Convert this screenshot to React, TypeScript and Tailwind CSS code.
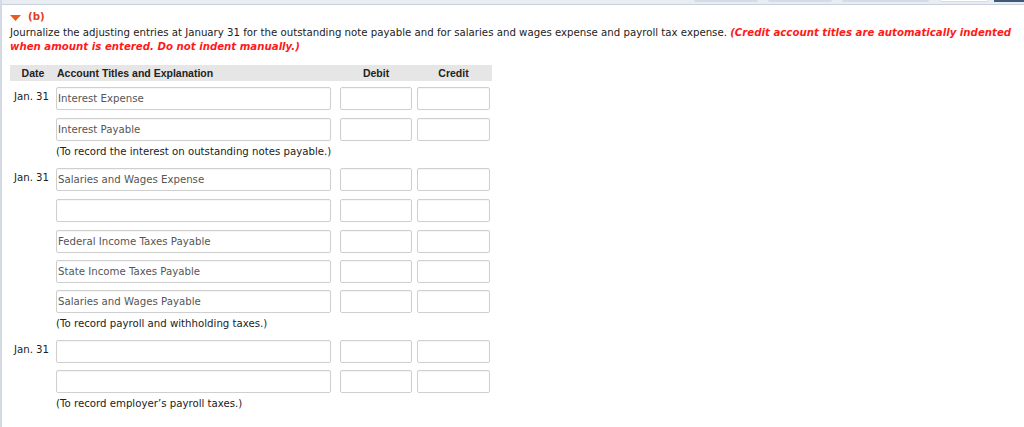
import React from "react";

type Row = { date?: string; text?: string; mt: string };

function Input({ text, w }: { text?: string; w: string }) {
  return (
    <div
      className={`${w} h-[23px] border border-[#cfcfcf] rounded-[2px] bg-white text-[#555] text-[10.2px] leading-[21px] pl-[1px] shadow-[inset_0_1px_1px_rgba(0,0,0,0.04)] whitespace-nowrap overflow-hidden`}
    >
      {text}
    </div>
  );
}

function EntryRow({ date, text, mt }: Row) {
  return (
    <div className={`flex items-center ${mt}`}>
      <div className="w-[46px] text-center text-[10.2px] text-[#222] leading-[14px] -mt-[3px] pr-[3px]">{date}</div>
      <Input text={text} w="w-[275px]" />
      <div className="w-[9px]" />
      <Input w="w-[72px]" />
      <div className="w-[5px]" />
      <Input w="w-[73px]" />
    </div>
  );
}

function Note({ children, mt, mb }: { children: React.ReactNode; mt: string; mb: string }) {
  return (
    <div className={`pl-[46px] text-[10.2px] leading-[14px] text-[#222] ${mt} ${mb}`}>{children}</div>
  );
}

export default function App() {
  return (
    <div className="w-[1024px] h-[427px] bg-white border-l-2 border-[#d3dae3] font-['DejaVu_Sans',_Verdana,_sans-serif] overflow-hidden">
      <div className="relative h-[5px] bg-[#e9edf2] border-b border-[#c7d1dd]">
        <div className="absolute left-[692px] top-0 w-[64px] h-[2px] bg-[#d5dce5] rounded-b" />
        <div className="absolute left-[766px] top-0 w-[64px] h-[2px] bg-[#d5dce5] rounded-b" />
        <div className="absolute left-[840px] top-0 w-[87px] h-[2px] bg-[#d5dce5] rounded-b" />
        <div className="absolute left-[938px] top-0 w-[48px] h-[2px] bg-white border border-t-0 border-[#d5dce5] rounded-b" />
        <div className="absolute left-[992px] top-0 w-[40px] h-[2px] bg-[#3d5a7a]" />
      </div>
      <div className="pl-[8px] pr-[8px]">
        <div className="flex items-center mt-[6px] h-[12px]">
          <svg width="11" height="6" viewBox="0 0 11 6" className="mr-[7px] mt-[1px]">
            <polygon points="0,0 11,0 5.5,6" fill="#ec5a1f" />
          </svg>
          <span className="text-[10.2px] font-bold text-[#e23b1c] leading-[12px]">(b)</span>
        </div>
        <p className="mt-[3px] text-[10.2px] leading-[14px] text-[#222] w-[1006px]">
          Journalize the adjusting entries at January 31 for the outstanding note payable and for salaries and wages expense and payroll tax expense.{" "}
          <span className="text-[#ff1a1a] font-bold italic">
            (Credit account titles are automatically indented when amount is entered. Do not indent manually.)
          </span>
        </p>
        <div className="mt-[11px] w-[482px] h-[16px] bg-[#e6e6e6] flex items-center text-[10.5px] font-bold text-[#222] leading-[16px] font-['Liberation_Sans',_Arial,_sans-serif]">
          <div className="w-[46px] text-center">Date</div>
          <div className="w-[275px] pl-[1px]">Account Titles and Explanation</div>
          <div className="w-[9px]" />
          <div className="w-[72px] text-center">Debit</div>
          <div className="w-[5px]" />
          <div className="w-[73px] text-center">Credit</div>
        </div>
        <EntryRow date="Jan. 31" text="Interest Expense" mt="mt-[6px]" />
        <EntryRow text="Interest Payable" mt="mt-[8px]" />
        <Note mt="mt-[4px]" mb="mb-[9px]">(To record the interest on outstanding notes payable.)</Note>
        <EntryRow date="Jan. 31" text="Salaries and Wages Expense" mt="mt-0" />
        <EntryRow mt="mt-[8px]" />
        <EntryRow text="Federal Income Taxes Payable" mt="mt-[8px]" />
        <EntryRow text="State Income Taxes Payable" mt="mt-[7px]" />
        <EntryRow text="Salaries and Wages Payable" mt="mt-[7px]" />
        <Note mt="mt-[4px]" mb="mb-[9px]">(To record payroll and withholding taxes.)</Note>
        <EntryRow date="Jan. 31" mt="mt-0" />
        <EntryRow mt="mt-[7px]" />
        <Note mt="mt-[4px]" mb="mb-0">(To record employer’s payroll taxes.)</Note>
      </div>
    </div>
  );
}
